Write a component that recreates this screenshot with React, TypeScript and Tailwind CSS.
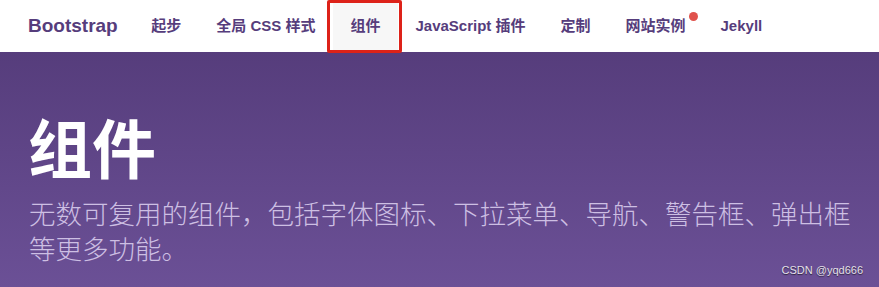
import React from "react";

const font = "font-['Liberation_Sans','Noto_Sans_CJK_SC',sans-serif]";

interface NavItemProps {
  label: string;
  active?: boolean;
  badge?: boolean;
}

const NavItem: React.FC<NavItemProps> = ({ label, active = false, badge = false }) => (
  <li className={`relative flex items-center px-[17.5px] ${active ? "bg-[#f7f7f7]" : ""}`}>
    <span className="text-[15px] font-bold text-[#563d7c]">{label}</span>
    {badge && (
      <span className="absolute left-[calc(100%-14px)] top-[12px] w-[9px] h-[9px] rounded-full bg-[#e0524c]" />
    )}
    {active && (
      <span className="absolute -left-[6px] -right-[4px] top-0 -bottom-px border-[3px] border-[#dd2219] rounded-[2px] pointer-events-none" />
    )}
  </li>
);

const items = ["起步", "全局 CSS 样式", "组件", "JavaScript 插件", "定制", "网站实例", "Jekyll"];

export default function App() {
  return (
    <div className={`w-[879px] h-[287px] overflow-hidden relative ${font}`}>
      <nav className="relative z-10 h-[52px] bg-white flex pl-[11px]">
        <a className="flex items-center pl-[17px] pr-[16px] text-[19px] font-bold text-[#563d7c]">Bootstrap</a>
        <ul className="flex">
          {items.map((it) => (
            <NavItem key={it} label={it} active={it === "组件"} badge={it === "网站实例"} />
          ))}
        </ul>
      </nav>
      <header className="h-[235px] bg-gradient-to-b from-[#563d7c] to-[#6b5096] pl-[29px] pr-[20px] pt-[67px]">
        <h1 className="text-[64px] leading-none font-bold text-white -ml-[1px]">组件</h1>
        <p className="mt-[15px] text-[26.5px] leading-[35px] font-light text-[#cdbfe3]">
          无数可复用的组件，包括字体图标、下拉菜单、导航、警告框、弹出框等更多功能。
        </p>
      </header>
      <span className="absolute right-[16px] bottom-[10px] text-[11px] leading-[14px] text-[#e4e0ea] [text-shadow:0_1px_1px_rgba(0,0,0,0.6)]">
        CSDN @yqd666
      </span>
    </div>
  );
}
